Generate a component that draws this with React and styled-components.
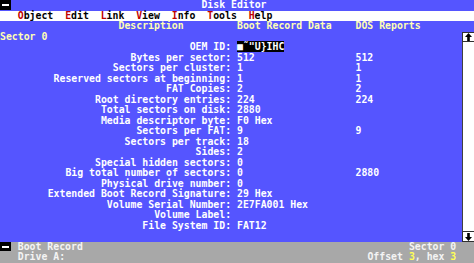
import styled, { createGlobalStyle } from 'styled-components';

const ROW = 263 / 25;
const COL = 474 / 80;

const GlobalStyle = createGlobalStyle`
  html, body {
    margin: 0;
    padding: 0;
    background: #5555ff;
  }
`;

const Screen = styled.div`
  width: 474px;
  height: 263px;
  overflow: hidden;
  display: flex;
  flex-direction: column;
  background: #5555ff;
  color: #ffffff;
  font-family: 'DejaVu Sans Mono', 'Liberation Mono', monospace;
  font-weight: bold;
  font-size: 9.84px;
  line-height: ${ROW}px;
  white-space: pre;
`;

const TitleBar = styled.div`
  height: ${ROW}px;
  display: flex;
  align-items: stretch;
`;

const SysBox = styled.div`
  width: ${COL * 2 - 1}px;
  height: ${ROW - 1}px;
  background: #000;
  display: flex;
  align-items: center;
  justify-content: center;

  &::after {
    content: '';
    width: 7px;
    height: 2px;
    background: #fff;
  }
`;

const Title = styled.div`
  padding-left: ${COL * 32 + 1}px;
`;

const MenuBar = styled.div`
  height: ${ROW}px;
  display: flex;
  background: #ffffff;
  color: #000;
  padding-left: ${COL * 3}px;
  gap: ${COL * 2}px;
`;

const MenuItem = styled.span``;

const Hot = styled.span`
  color: #c00000;
`;

const Main = styled.div`
  height: ${ROW * 21}px;
  display: flex;
`;

const List = styled.div`
  flex: 1;
  display: flex;
  flex-direction: column;
`;

const Row = styled.div`
  height: ${ROW}px;
  display: grid;
  grid-template-columns: ${COL * 40}px ${COL * 20}px 1fr;
  color: ${(p) => (p.$header ? '#ffffb4' : '#ffffff')};
`;

const Label = styled.div`
  text-align: ${(p) => (p.$left ? 'left' : 'right')};
  padding-right: ${(p) => (p.$left ? 0 : COL)}px;
  padding-left: ${(p) => (p.$indent ? COL * 20 : 0)}px;
`;

const Cell = styled.div``;

const Cursor = styled.span`
  background: #000;
  color: #fff;
`;

const SectorLine = styled.div`
  height: ${ROW}px;
  color: #ffffb4;
`;

const Scroll = styled.div`
  width: 12px;
  margin-top: ${ROW}px;
  height: ${ROW * 20}px;
  display: flex;
  flex-direction: column;
  background: #ffffff;
  border-left: 1px solid #404040;
  box-sizing: border-box;
`;

const Arrow = styled.div`
  height: ${ROW}px;
  box-sizing: border-box;
  border: 1px solid #303030;
  border-right: none;
  margin-left: -1px;
  display: flex;
  align-items: center;
  justify-content: center;
  background: #fff;
`;

const Track = styled.div`
  flex: 1;
`;

const StatusBar = styled.div`
  height: ${ROW * 2}px;
  background: #a8a8a8;
  color: #f4f4f4;
  display: flex;
  flex-direction: column;
`;

const StatusRow = styled.div`
  height: ${ROW}px;
  display: flex;
  align-items: stretch;
  padding-left: ${(p) => (p.$box ? 0 : COL * 3)}px;
  padding-right: ${COL * 3}px;
`;

const StatusText = styled.span`
  padding-left: ${(p) => (p.$gap ? COL + 1 : 0)}px;
  flex: 1;
`;

const Yellow = styled.span`
  color: #ffff55;
`;

const ArrowIcon = ({ down }) => (
  <svg width="7" height="8" viewBox="0 0 8 9">
    <polygon
      points="4,0 8,4.5 5.5,4.5 5.5,9 2.5,9 2.5,4.5 0,4.5"
      fill="#000"
      transform={down ? 'rotate(180 4 4.5)' : undefined}
    />
  </svg>
);

const menu = [
  ['O', 'bject'],
  ['E', 'dit'],
  ['L', 'ink'],
  ['V', 'iew'],
  ['I', 'nfo'],
  ['T', 'ools'],
  ['H', 'elp'],
];

const fields = [
  ['Bytes per sector', '512', '512'],
  ['Sectors per cluster', '1', '1'],
  ['Reserved sectors at beginning', '1', '1'],
  ['FAT Copies', '2', '2'],
  ['Root directory entries', '224', '224'],
  ['Total sectors on disk', '2880', ''],
  ['Media descriptor byte', 'F0 Hex', ''],
  ['Sectors per FAT', '9', '9'],
  ['Sectors per track', '18', ''],
  ['Sides', '2', ''],
  ['Special hidden sectors', '0', ''],
  ['Big total number of sectors', '0', '2880'],
  ['Physical drive number', '0', ''],
  ['Extended Boot Record Signature', '29 Hex', ''],
  ['Volume Serial Number', '2E7FA001 Hex', ''],
  ['Volume Label', '', ''],
  ['File System ID', 'FAT12', ''],
];

export default function App() {
  return (
    <Screen>
      <GlobalStyle />
      <TitleBar>
        <SysBox />
        <Title>Disk Editor</Title>
      </TitleBar>
      <MenuBar>
        {menu.map(([hot, rest]) => (
          <MenuItem key={hot + rest}>
            <Hot>{hot}</Hot>
            {rest}
          </MenuItem>
        ))}
      </MenuBar>
      <Main>
        <List>
          <Row $header>
            <Label $left $indent>Description</Label>
            <Cell>Boot Record Data</Cell>
            <Cell>DOS Reports</Cell>
          </Row>
          <SectorLine>Sector 0</SectorLine>
          <Row>
            <Label>OEM ID:</Label>
            <Cell>
              <Cursor>{'■˜"U}IHC'}</Cursor>
            </Cell>
            <Cell />
          </Row>
          {fields.map(([label, value, dos]) => (
            <Row key={label}>
              <Label>{label}:</Label>
              <Cell>{value}</Cell>
              <Cell>{dos}</Cell>
            </Row>
          ))}
        </List>
        <Scroll>
          <Arrow>
            <ArrowIcon />
          </Arrow>
          <Track />
          <Arrow>
            <ArrowIcon down />
          </Arrow>
        </Scroll>
      </Main>
      <StatusBar>
        <StatusRow $box>
          <SysBox />
          <StatusText $gap>Boot Record</StatusText>
          <span>Sector 0</span>
        </StatusRow>
        <StatusRow>
          <StatusText>Drive A:</StatusText>
          <span>
            Offset <Yellow>3</Yellow>, hex <Yellow>3</Yellow>
          </span>
        </StatusRow>
      </StatusBar>
    </Screen>
  );
}
